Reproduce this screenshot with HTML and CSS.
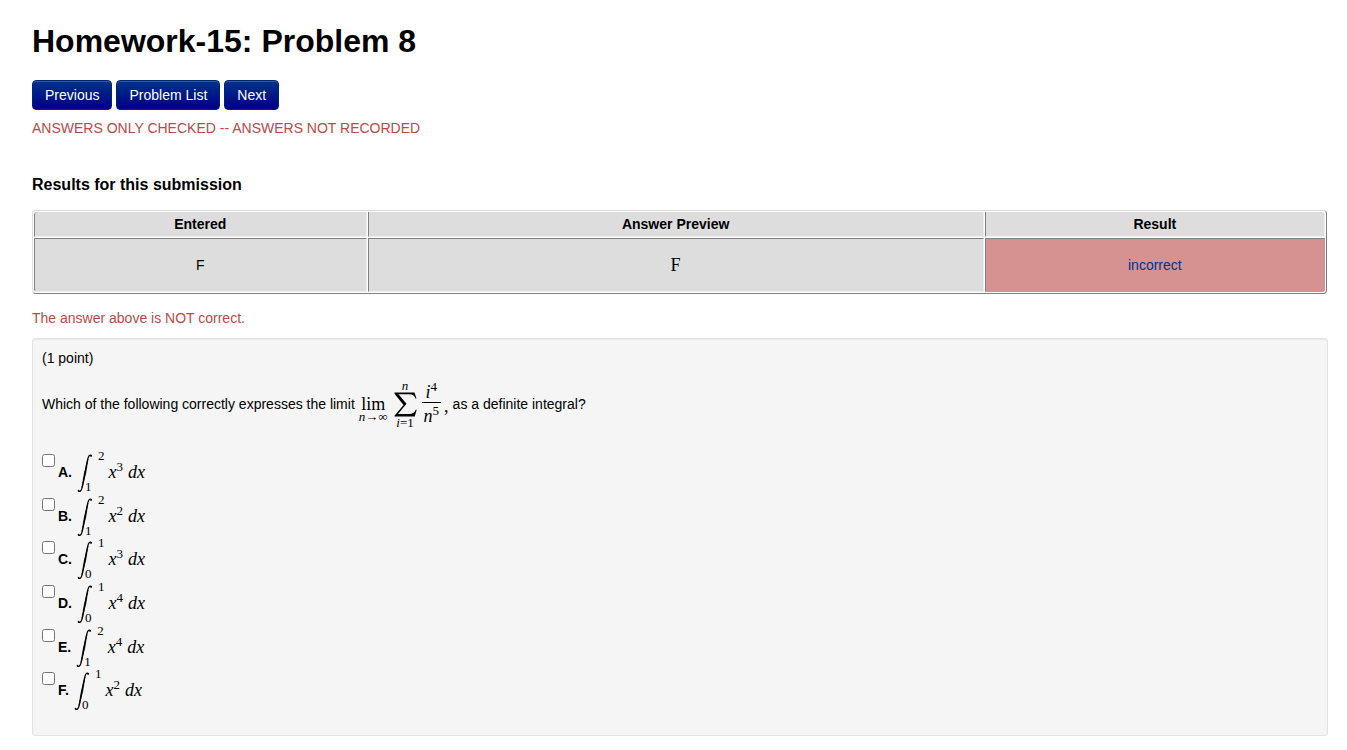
FILE: index.html
```html
<!DOCTYPE html>
<html lang="en">
<head>
    <meta charset="UTF-8">
    <meta name="viewport" content="width=device-width, initial-scale=1.0">
    <title>Homework-15: Problem 8</title>
    <link rel="stylesheet" href="styles.css">
</head>
<body>
    <svg class="defs" width="0" height="0" aria-hidden="true">
        <symbol id="int" viewBox="0 0 16 40">
            <path d="M14.500 3C13.900 1.600 12.300 1.800 11.400 4C10.200 7 9.200 13 8 20C6.800 27 6 32.500 4.700 36C3.800 38.600 2.200 39 1.200 37.800" fill="none" stroke="currentColor" stroke-width="1.200"/>
            <path d="M11 6L7.200 21L4.900 34.500L8.800 20Z" fill="currentColor" stroke="currentColor" stroke-width=".6"/>
            <circle cx="14.100" cy="2.900" r=".9" fill="currentColor"/>
            <circle cx="1.600" cy="37.600" r=".9" fill="currentColor"/>
        </symbol>
    </svg>
    <main class="page">
        <h1>Homework-15: Problem 8</h1>
        <nav class="btn-box">
            <a class="btn" href="#prev">Previous</a>
            <a class="btn" href="#list">Problem List</a>
            <a class="btn" href="#next">Next</a>
        </nav>
        <p class="error">ANSWERS ONLY CHECKED -- ANSWERS NOT RECORDED</p>

        <h3>Results for this submission</h3>
        <table class="results">
            <thead>
                <tr>
                    <th class="col-entered">Entered</th>
                    <th class="col-preview">Answer Preview</th>
                    <th>Result</th>
                </tr>
            </thead>
            <tbody>
                <tr>
                    <td>F</td>
                    <td class="preview">F</td>
                    <td class="incorrect"><a href="#problem">incorrect</a></td>
                </tr>
            </tbody>
        </table>
        <p class="error">The answer above is NOT correct.</p>

        <form class="problem" id="problem">
            <p class="points">(1 point)</p>
            <div class="question">
                <span>Which of the following correctly expresses the limit</span>
                <span class="math">
                    <span class="lim"><span>lim</span><small><i>n</i>→∞</small></span>
                    <span class="sum">
                        <small><i>n</i></small>
                        <svg width="23" height="25" viewBox="0 0 23 25" aria-hidden="true">
                            <path d="M.500 .500H20.500L22.500 6.500H21.500C20.500 3.500 18.500 2.200 15 2.200H4.500L12.500 11.800L4 22H15C19 22 20.800 20.500 21.800 17.800H22.700L20.700 24.500H.500V23.700L9.500 13L.500 1.800Z" fill="currentColor"/>
                        </svg>
                        <small><i>i</i>=1</small>
                    </span>
                    <span class="frac">
                        <span class="num"><i>i</i><sup>4</sup></span>
                        <span class="den"><i>n</i><sup>5</sup></span>
                    </span>
                    <span class="comma">,</span>
                </span>
                <span>as a definite integral?</span>
            </div>
            <div class="options">
                <label class="option">
                    <input type="checkbox" name="answer" value="A"><b>A.</b>
                    <span class="integral"><svg class="int"><use href="#int"/></svg><span class="limits"><small class="upper">2</small><small>1</small></span><span class="body"><i>x</i><sup>3</sup><i class="dx">dx</i></span></span>
                </label>
                <label class="option">
                    <input type="checkbox" name="answer" value="B"><b>B.</b>
                    <span class="integral"><svg class="int"><use href="#int"/></svg><span class="limits"><small class="upper">2</small><small>1</small></span><span class="body"><i>x</i><sup>2</sup><i class="dx">dx</i></span></span>
                </label>
                <label class="option">
                    <input type="checkbox" name="answer" value="C"><b>C.</b>
                    <span class="integral"><svg class="int"><use href="#int"/></svg><span class="limits"><small class="upper">1</small><small>0</small></span><span class="body"><i>x</i><sup>3</sup><i class="dx">dx</i></span></span>
                </label>
                <label class="option">
                    <input type="checkbox" name="answer" value="D"><b>D.</b>
                    <span class="integral"><svg class="int"><use href="#int"/></svg><span class="limits"><small class="upper">1</small><small>0</small></span><span class="body"><i>x</i><sup>4</sup><i class="dx">dx</i></span></span>
                </label>
                <label class="option">
                    <input type="checkbox" name="answer" value="E"><b>E.</b>
                    <span class="integral"><svg class="int"><use href="#int"/></svg><span class="limits"><small class="upper">2</small><small>1</small></span><span class="body"><i>x</i><sup>4</sup><i class="dx">dx</i></span></span>
                </label>
                <label class="option">
                    <input type="checkbox" name="answer" value="F"><b>F.</b>
                    <span class="integral"><svg class="int"><use href="#int"/></svg><span class="limits"><small class="upper">1</small><small>0</small></span><span class="body"><i>x</i><sup>2</sup><i class="dx">dx</i></span></span>
                </label>
            </div>
        </form>
    </main>
</body>
</html>
```
FILE: styles.css
```css
*{
    box-sizing: border-box;
}
body{
    margin: 0;
    background: #ffffff;
    color: #000000;
    font: 14px/20px "Liberation Sans", Arial, sans-serif;
}
h1,h3,p{
    margin: 0;
}
.defs{
    display: block;
}
.page{
    padding: 21px 19px 14px 32px;
}
h1{
    font-size: 32px;
    line-height: 40px;
    margin-bottom: 19px;
}
h3{
    font-size: 16px;
    line-height: 20px;
    margin: 37px 0 15px;
}
.btn-box{
    display: flex;
    gap: 4px;
    margin-bottom: 8px;
}
.btn{
    padding: 4px 12px;
    border: 1px solid #00247a;
    border-radius: 4px;
    background: linear-gradient(#003388, #000088);
    box-shadow: inset 0 1px 0 rgba(255,255,255,0.2);
    color: #ffffff;
    text-decoration: none;
}
.error{
    color: #b94a48;
}

/* results table */
.results{
    width: calc(100% - 1px);
    border: 1px solid #808080;
    border-color: #dddddd #808080 #808080 #dddddd;
    border-radius: 4px;
    border-collapse: separate;
    border-spacing: 1px;
    margin-bottom: 14px;
    table-layout: fixed;
}
.results th,.results td{
    background: #dddddd;
    border: 1px solid #808080;
    border-color: #808080 #eeeeee #eeeeee #808080;
    padding: 2px 4px;
    text-align: center;
}
.results th{
    border-top: 0;
}
.results td{
    height: 54px;
}
.results th:first-child{
    border-top-left-radius: 3px;
}
.results th:last-child{
    border-top-right-radius: 3px;
}
.results td:first-child{
    border-bottom-left-radius: 3px;
}
.results td:last-child{
    border-bottom-right-radius: 3px;
}
.results .preview{
    font-family: "Liberation Serif", serif;
    font-size: 18px;
}
.results .incorrect{
    background: #d69191;
    border-color: #808080 #d69191 #d69191 #808080;
}
.incorrect a{
    color: #003388;
    text-decoration: none;
}
.col-entered{
    width: 25.8%;
}
.col-preview{
    width: 47.8%;
}

/* problem body */
.problem{
    margin-top: 10px;
    padding: 9px 9px 23px;
    background: #f5f5f5;
    border: 1px solid #e3e3e3;
    border-radius: 3px;
    box-shadow: inset 0 1px 1px rgba(0,0,0,0.05);
}
.question{
    display: flex;
    align-items: center;
    height: 52px;
    margin: 10px 0 20px;
}
.math,.integral{
    font-family: "Liberation Serif", serif;
    font-size: 18px;
}
.math{
    display: flex;
    align-items: center;
    margin: 0 4px;
}
small{
    font-size: 13px;
    line-height: 12px;
}
sup{
    font-size: 13px;
    line-height: 0;
    vertical-align: 7px;
}
.lim,.sum,.frac{
    display: flex;
    flex-direction: column;
    align-items: center;
}
.lim{
    padding-top: 12px;
    line-height: 14px;
}
.sum{
    margin: 0 5px 0 6px;
}
.frac{
    line-height: 20px;
}
.num{
    padding: 0 4px;
    border-bottom: 1px solid #000000;
}
.den{
    padding-top: 3px;
}
.comma{
    padding: 4px 0 0 3px;
}
.options{
    display: grid;
    grid-auto-rows: 1fr;
    height: 262px;
}
.option{
    display: flex;
    align-items: flex-start;
}
.option input{
    width: 13px;
    height: 13px;
    margin: 4px 3px 0 0;
}
.option b{
    margin: 12px 5px 0 0;
}
.integral{
    display: flex;
    padding-top: 3px;
}
.int{
    width: 16px;
    height: 40px;
}
.limits{
    display: flex;
    flex-direction: column;
    justify-content: space-between;
    height: 43px;
    margin: -3px 4px 0 -8px;
}
.upper{
    padding-left: 13px;
}
.body{
    padding-top: 9px;
}
.dx{
    margin-left: 5px;
}
```
